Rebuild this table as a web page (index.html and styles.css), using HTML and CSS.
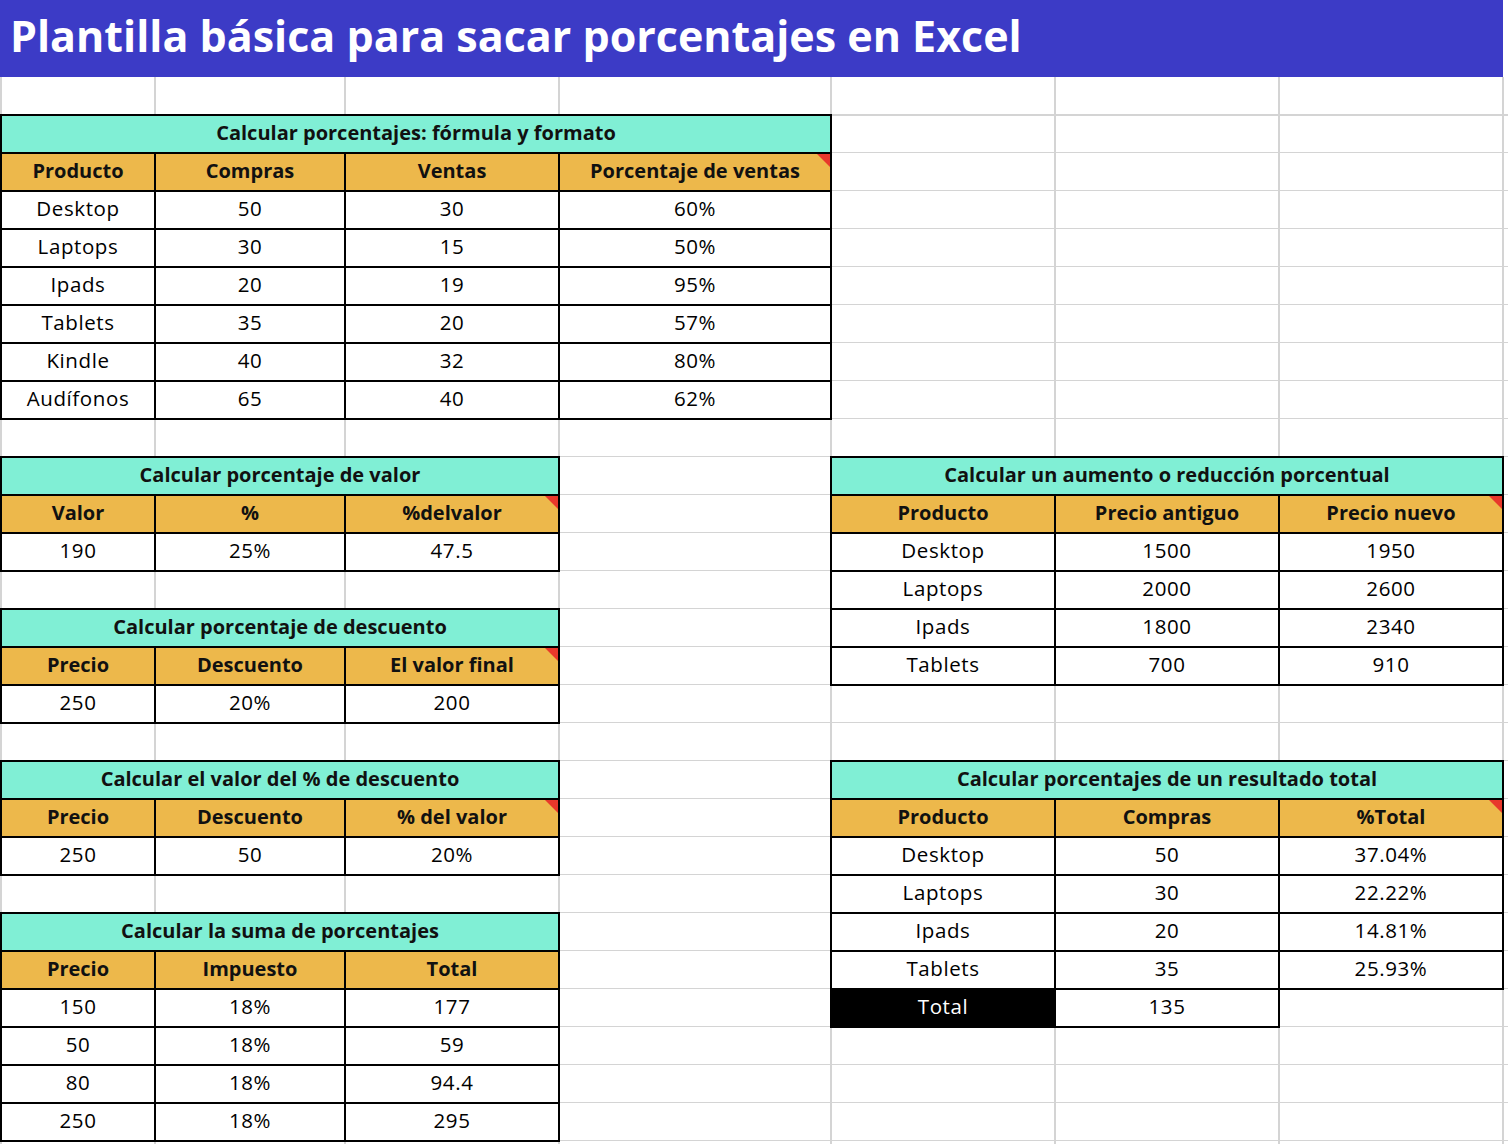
FILE: index.html
```html
<!DOCTYPE html>
<html lang="es">
<head>
<meta charset="utf-8">
<title>Plantilla básica para sacar porcentajes en Excel</title>
<link rel="stylesheet" href="styles.css">
</head>
<body>
<header class="banner"><h1>Plantilla básica para sacar porcentajes en Excel</h1></header>
<main class="sheet">

  <section class="tbl cols-a place-1">
    <div class="cap">Calcular porcentajes: fórmula y formato</div>
    <div class="hd">Producto</div><div class="hd">Compras</div><div class="hd">Ventas</div><div class="hd note">Porcentaje de ventas</div>
    <div>Desktop</div><div>50</div><div>30</div><div>60%</div>
    <div>Laptops</div><div>30</div><div>15</div><div>50%</div>
    <div>Ipads</div><div>20</div><div>19</div><div>95%</div>
    <div>Tablets</div><div>35</div><div>20</div><div>57%</div>
    <div>Kindle</div><div>40</div><div>32</div><div>80%</div>
    <div>Audífonos</div><div>65</div><div>40</div><div>62%</div>
  </section>

  <section class="tbl cols-b place-2">
    <div class="cap">Calcular porcentaje de valor</div>
    <div class="hd">Valor</div><div class="hd">%</div><div class="hd note">%delvalor</div>
    <div>190</div><div>25%</div><div>47.5</div>
  </section>

  <section class="tbl cols-c place-3">
    <div class="cap">Calcular un aumento o reducción porcentual</div>
    <div class="hd">Producto</div><div class="hd">Precio antiguo</div><div class="hd note">Precio nuevo</div>
    <div>Desktop</div><div>1500</div><div>1950</div>
    <div>Laptops</div><div>2000</div><div>2600</div>
    <div>Ipads</div><div>1800</div><div>2340</div>
    <div>Tablets</div><div>700</div><div>910</div>
  </section>

  <section class="tbl cols-b place-4">
    <div class="cap">Calcular porcentaje de descuento</div>
    <div class="hd">Precio</div><div class="hd">Descuento</div><div class="hd note">El valor final</div>
    <div>250</div><div>20%</div><div>200</div>
  </section>

  <section class="tbl cols-b place-5">
    <div class="cap">Calcular el valor del % de descuento</div>
    <div class="hd">Precio</div><div class="hd">Descuento</div><div class="hd note">% del valor</div>
    <div>250</div><div>50</div><div>20%</div>
  </section>

  <section class="tbl cols-c place-6">
    <div class="cap">Calcular porcentajes de un resultado total</div>
    <div class="hd">Producto</div><div class="hd">Compras</div><div class="hd note">%Total</div>
    <div>Desktop</div><div>50</div><div>37.04%</div>
    <div>Laptops</div><div>30</div><div>22.22%</div>
    <div>Ipads</div><div>20</div><div>14.81%</div>
    <div>Tablets</div><div>35</div><div>25.93%</div>
  </section>

  <section class="tbl cols-d place-7">
    <div class="dark">Total</div><div>135</div>
  </section>

  <section class="tbl cols-b place-8">
    <div class="cap">Calcular la suma de porcentajes</div>
    <div class="hd">Precio</div><div class="hd">Impuesto</div><div class="hd">Total</div>
    <div>150</div><div>18%</div><div>177</div>
    <div>50</div><div>18%</div><div>59</div>
    <div>80</div><div>18%</div><div>94.4</div>
    <div>250</div><div>18%</div><div>295</div>
  </section>

</main>
</body>
</html>
```
FILE: styles.css
```css
html, body {
  margin: 0;
  padding: 0;
  background: #fff;
}
body {
  width: 1508px;
  font-family: "Open Sans", "Noto Sans", "Liberation Sans", sans-serif;
  color: #000;
}
.banner {
  width: 1503px;
  height: 77px;
  background: #3c3bc6;
  display: flex;
  align-items: center;
  box-sizing: border-box;
  padding: 0 0 7px 10px;
}
.banner h1 {
  margin: 0;
  color: #fff;
  font-size: 43px;
  font-weight: 700;
  letter-spacing: 0;
  line-height: 1;
}
.sheet {
  display: grid;
  grid-template-columns: 154px 190px 214px 272px 224px 224px 224px 1fr;
  grid-template-rows: repeat(28, 38px) 1fr;
  height: 1067px;
  padding-left: 1px;
  background-color: #fff;
  background-image:
    linear-gradient(#d4d4d4, #d4d4d4),
    linear-gradient(#d4d4d4, #d4d4d4),
    linear-gradient(#d4d4d4, #d4d4d4),
    linear-gradient(#d4d4d4, #d4d4d4),
    linear-gradient(#d4d4d4, #d4d4d4),
    linear-gradient(#d4d4d4, #d4d4d4),
    linear-gradient(#d4d4d4, #d4d4d4),
    linear-gradient(#d4d4d4, #d4d4d4),
    linear-gradient(to bottom, transparent 0, transparent 37px, #d4d4d4 37px, #d4d4d4 38px);
  background-size:
    2px 100%, 2px 100%, 2px 100%, 2px 100%, 2px 100%, 2px 100%, 2px 100%, 2px 100%,
    100% 38px;
  background-position:
    0 0, 154px 0, 344px 0, 558px 0, 830px 0, 1054px 0, 1278px 0, 1502px 0,
    0 0;
  background-repeat:
    no-repeat, no-repeat, no-repeat, no-repeat, no-repeat, no-repeat, no-repeat, no-repeat,
    repeat-y;
  position: relative;
}
.sheet::after {
  content: "";
  position: absolute;
  left: 0;
  right: 0;
  top: 38px;
  height: 1px;
  background: #d4d4d4;
}

.tbl {
  display: grid;
  grid-auto-rows: 38px;
  outline: 1px solid #000;
  background: #fff;
  z-index: 1;
}
.tbl > div {
  box-sizing: border-box;
  border: 1px solid #000;
  display: flex;
  align-items: center;
  justify-content: center;
  font-size: 20.5px;
  letter-spacing: 0.6px;
  line-height: 1;
  padding-bottom: 4px;
  white-space: nowrap;
  position: relative;
}
.tbl > .cap {
  grid-column: 1 / -1;
  background: #80efd5;
  font-weight: 700;
  font-size: 20px;
  letter-spacing: 0;
  padding-bottom: 2px;
  color: #111;
}
.tbl > .hd {
  background: #edb84b;
  font-weight: 700;
  font-size: 20px;
  letter-spacing: 0;
  padding-bottom: 3px;
  color: #111;
}
.tbl > .note::after {
  content: "";
  position: absolute;
  top: 0;
  right: 0;
  width: 0;
  height: 0;
  border-top: 13px solid #e8382b;
  border-left: 13px solid transparent;
}
.tbl > .dark {
  background: #000;
  color: #fff;
}

.cols-a { grid-template-columns: 154px 190px 214px 272px; }
.cols-b { grid-template-columns: 154px 190px 214px; }
.cols-c { grid-template-columns: 224px 224px 224px; }
.cols-d { grid-template-columns: 224px 224px; }

.place-1 { grid-column: 1 / 5; grid-row: 2 / 10; }
.place-2 { grid-column: 1 / 4; grid-row: 11 / 14; }
.place-3 { grid-column: 5 / 8; grid-row: 11 / 17; }
.place-4 { grid-column: 1 / 4; grid-row: 15 / 18; }
.place-5 { grid-column: 1 / 4; grid-row: 19 / 22; }
.place-6 { grid-column: 5 / 8; grid-row: 19 / 25; }
.place-7 { grid-column: 5 / 7; grid-row: 25 / 26; }
.place-8 { grid-column: 1 / 4; grid-row: 23 / 29; }
```
